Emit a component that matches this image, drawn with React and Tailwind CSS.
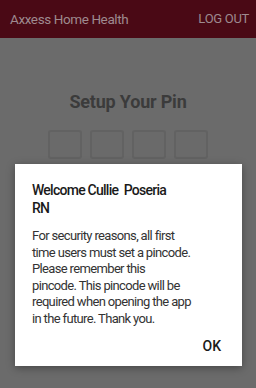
const PinBox = () => (
  <div className="w-[34px] h-[29px] rounded-[3px] border-2 border-[#626262] bg-[#6a6a6a]" />
);

export default function App() {
  return (
    <div
      className="relative w-[256px] h-[388px] overflow-hidden bg-[#6b6b6b]"
      style={{ fontFamily: 'Roboto, "Liberation Sans", sans-serif' }}
    >
      {/* Toolbar (dimmed by the dialog scrim) */}
      <div className="h-[38px] bg-[#4a0915] flex items-center justify-between pl-[10px] pr-[7px]">
        <span className="text-[13.5px] tracking-[-0.4px] text-[#9e8a8f]">Axxess Home Health</span>
        <span className="text-[13px] tracking-[-0.3px] text-[#9e8a8f]">LOG OUT</span>
      </div>

      {/* Page content */}
      <div className="flex flex-col items-center pt-[53px]">
        <h1 className="text-[18px] font-bold tracking-[-0.2px] text-[#3b3b3b] leading-[22px]">Setup Your Pin</h1>
        <div className="flex gap-[8px] mt-[17px]">
          <PinBox />
          <PinBox />
          <PinBox />
          <PinBox />
        </div>
      </div>

      {/* Welcome dialog */}
      <div className="absolute left-[15px] top-[164px] w-[227px] h-[202px] bg-white shadow-[0_2px_8px_rgba(0,0,0,0.35)] pl-[17px] pr-[8px] pt-[18px]">
        <h2 className="text-[14px] leading-[17.5px] tracking-[-0.75px] text-[#1a1a1a] font-medium">
          Welcome Cullie&nbsp; Poseria
          <br />
          RN
        </h2>
        <p className="mt-[11px] text-[13px] leading-[16.5px] tracking-[-0.65px] text-[#333333] whitespace-nowrap">
          For security reasons, all first
          <br />
          time users must set a pincode.
          <br />
          Please remember this
          <br />
          pincode. This pincode will be
          <br />
          required when opening the app
          <br />
          in the future. Thank you.
        </p>
        <div className="flex justify-end mt-[11px] pr-[13px]">
          <span className="text-[14px] leading-[16px] font-medium text-[#1a1a1a]">OK</span>
        </div>
      </div>
    </div>
  );
}
